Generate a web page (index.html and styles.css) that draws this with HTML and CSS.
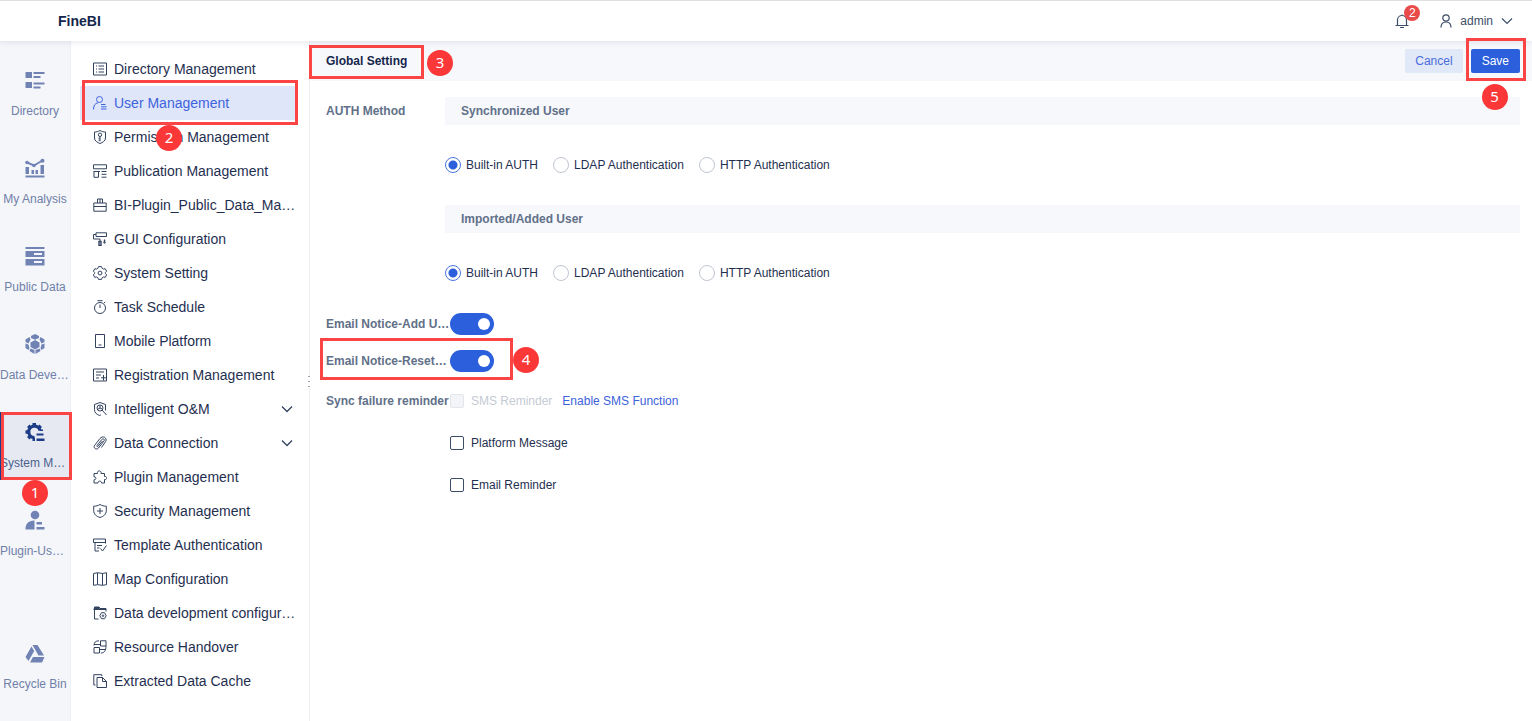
FILE: index.html
```html
<!DOCTYPE html>
<html lang="en">
<head>
    <meta charset="UTF-8">
    <meta name="viewport" content="width=device-width, initial-scale=1">
    <title>FineBI</title>
    <link rel="stylesheet" href="styles.css">
</head>
<body>
<header class="topbar">
    <div class="brand">FineBI</div>
    <div class="account">
        <button class="bell" aria-label="Notifications">
            <svg width="14" height="16" viewBox="0 0 14 16"><path d="M0.500 12.500h13M2.500 12.500V7a4.500 4.500 0 0 1 9 0v5.500M7 2.500V1.500M5 14.500h4"/></svg>
            <span class="count">2</span>
        </button>
        <button class="user">
            <svg width="12" height="14" viewBox="0 0 12 14"><circle cx="6" cy="4" r="3.200"/><path d="M1 13.500c0-3.800 2-5.500 5-5.500s5 1.700 5 5.500"/></svg>
            <span>admin</span>
            <svg width="12" height="8" viewBox="0 0 12 8"><path d="M1 1.500l5 5 5-5"/></svg>
        </button>
    </div>
</header>

<div class="layout">
    <nav class="rail">
        <a href="#" class="rail-item">
            <svg width="20" height="20" viewBox="0 0 20 20"><path d="M0.500 2h6.500v6H0.500zM0.500 12h6.500v6H0.500zM8.500 2H19.500v2H8.500zM8.500 6h7v2h-7zM8.500 12.500H19.500v2H8.500zM8.500 16.500h7v2h-7z"/></svg>
            <span>Directory</span>
        </a>
        <a href="#" class="rail-item">
            <svg width="20" height="20" viewBox="0 0 20 20"><path d="M0.500 17.500h19v2h-19zM0.500 9h3.500v7H0.500zM6.500 12h2.500v4H6.500zM10.500 12H13v4h-2.500zM15.500 7h3.500v9h-3.500z"/><path d="M2 4.500l7 3 8.500-5" fill="none" stroke="currentColor" stroke-width="2"/><circle cx="2" cy="4.500" r="1.800"/><circle cx="9" cy="7.500" r="1.800"/><circle cx="17.500" cy="2.800" r="2"/></svg>
            <span>My Analysis</span>
        </a>
        <a href="#" class="rail-item">
            <svg width="20" height="20" viewBox="0 0 20 20"><path fill-rule="evenodd" d="M0.500 1h19v2h-19zM0.500 5h19v6h-19zM9 7v2h8V7zM0.500 13h19v6.500h-19zM9 15v2h8v-2z"/></svg>
            <span>Public Data</span>
        </a>
        <a href="#" class="rail-item">
            <svg width="20" height="20" viewBox="0 0 20 20"><path d="M6 2l4-2 4 2v2l-4 1.800L6 4zM0.500 5.500l4-2.500 1 2.500L3.500 9.500l-3-1.500zM19.500 5.500l-4-2.500-1 2.500 2 4 3-1.500zM0.500 9.500l3 1 1 4-1 1.500-3-2zM19.500 9.500l-3 1-1 4 1 1.500 3-2zM5.500 14.500l4 1.500v4l-5-3zM14.500 14.500l-4 1.500v4l5-3zM10 6l4.500 2.500v4.500L10 15.500 5.500 13V8.500z"/></svg>
            <span class="cut">Data Deve…</span>
        </a>
        <a href="#" class="rail-item active">
            <svg width="20" height="20" viewBox="0 0 20 20"><path d="M9.500 15.500A5.700 5.700 0 1 1 15 8.500" fill="none" stroke="currentColor" stroke-width="3.200"/><path d="M7.500 1h3.500v3H7.500zM0.500 8.200h3v3.500h-3zM2 5l2.500-2.500L7 5 4.500 7.500zM12 5l2.500-2.500L17 5l-2.500 2.500zM2 15l2.500-2.500L7 15l-2.500 2.500zM7.500 15.500h2.500V19H7.500zM14.500 7.500h3.500V9h-3.500zM11.500 11.500h7v2h-7zM11.500 16.500h8v2.500h-8z"/></svg>
            <span class="cut">System M…</span>
            <i class="mark mark-system"></i>
            <b class="step step-1">1</b>
        </a>
        <a href="#" class="rail-item">
            <svg width="20" height="20" viewBox="0 0 20 20"><circle cx="10" cy="5" r="4.300"/><path d="M0.500 19.500c0-5.500 2.500-9 9-9v9zM11.500 12H17v2.500h-5.500zM11.500 17h8v2.500h-8z"/></svg>
            <span class="cut">Plugin-Us…</span>
        </a>
        <a href="#" class="rail-item bottom">
            <svg width="20" height="20" viewBox="0 0 20 20"><path d="M7.500 2h5l6.500 10.500h-5.500zM6.500 3.500l2.700 4.500L3.500 18 0.500 14zM8 14h11.500L17 19.500H5z"/></svg>
            <span>Recycle Bin</span>
        </a>
    </nav>

    <nav class="menu">
        <a href="#" class="menu-item"><svg viewBox="0 0 14 14"><path d="M0.500 1h13v12h-13zM3 4h1M3 7h1M3 10h1M5.500 4H11M5.500 7H11M5.500 10H11"/></svg><span>Directory Management</span></a>
        <a href="#" class="menu-item active">
            <svg viewBox="0 0 14 14"><circle cx="6.500" cy="3.500" r="3"/><path d="M0.500 13.500c0-4 1.500-6 4.500-6.800M8 8.500h4.500M8 10.800h5.500M8 13h5.500"/></svg><span>User Management</span>
            <i class="mark mark-users"></i>
            <b class="step step-2">2</b>
        </a>
        <a href="#" class="menu-item"><svg viewBox="0 0 14 14"><path d="M7 0.500c2 1.200 3.500 1.500 5.500 1.500v6c0 3-3 4.500-5.500 5.500C4.500 12.500 1.500 11 1.500 8V2C3.500 2 5 1.700 7 0.500z"/><circle cx="7" cy="4.800" r="1.700"/><path d="M7 6.500v4.700M7 8.200H5.500M7 10.200H5.500"/></svg><span>Permission Management</span></a>
        <a href="#" class="menu-item"><svg viewBox="0 0 14 14"><path d="M0.500 0.800h13v4h-13zM1 7.500h4.500v5.800H1zM0.500 7.500H7M8.500 7.500h5M8.500 10.300h5M8.500 13.200h5"/></svg><span>Publication Management</span></a>
        <a href="#" class="menu-item"><svg viewBox="0 0 14 14"><path d="M0.800 5h12.400v8.200H0.800zM4.500 5V1h5v4M7 1v4M0.800 8.500h12.400"/></svg><span>BI-Plugin_Public_Data_Ma…</span></a>
        <a href="#" class="menu-item"><svg viewBox="0 0 14 14"><path d="M3 0.800h10.500v3.700H3zM3 2.500H0.500V7H7v2"/><path d="M6 9.500h2v4H6zM11.500 7.500v3" stroke-width="1.400"/><circle cx="11.500" cy="10.500" r="0.800"/></svg><span>GUI Configuration</span></a>
        <a href="#" class="menu-item"><svg viewBox="0 0 14 14"><path d="M5.500 0.600h3l.6 1.700 1.300.8 1.800-.4 1.400 2.500L12.400 6.500v1l1.200 1.400-1.400 2.500-1.800-.4-1.300.8-.6 1.600h-3l-.6-1.600-1.300-.8-1.800.4L.4 8.900l1.200-1.400v-1L.4 5.200l1.400-2.500 1.800.4 1.300-.8z"/><circle cx="7" cy="7" r="1.900"/></svg><span>System Setting</span></a>
        <a href="#" class="menu-item"><svg viewBox="0 0 14 14"><circle cx="7" cy="8" r="5.500"/><path d="M4.500 0.700h5M7 4.500V8M11 3l1.200-1"/></svg><span>Task Schedule</span></a>
        <a href="#" class="menu-item"><svg viewBox="0 0 14 14"><path d="M2.500 0.500h9v13h-9zM5.500 11h3"/></svg><span>Mobile Platform</span></a>
        <a href="#" class="menu-item"><svg viewBox="0 0 14 14"><path d="M13.500 6V1H0.500v12H9M3 4h8M3 7h5M3 10h3M10.500 7v5.500M8 9.800h5.500M13.500 6v7H9"/></svg><span>Registration Management</span></a>
        <a href="#" class="menu-item"><svg viewBox="0 0 14 14"><path d="M8 12.800l-1.500.7C3 12 1.500 10.500 1.500 7.500V2.500L7 0.500l5.500 2v6"/><circle cx="7" cy="6" r="3"/><path d="M9 8l4.500 5M7 3.500V6l2 1M4.500 7.500L7 6"/></svg><span>Intelligent O&amp;M</span><svg class="arrow" viewBox="0 0 12 8"><path d="M1 1.500l5 5 5-5"/></svg></a>
        <a href="#" class="menu-item"><svg viewBox="0 0 14 14"><path d="M4 9.500l4.800-6c1.500-1.500 3.200 0 2.200 1.500L5.500 12c-2 2.200-5.500.3-4-2.500L7 2.500C9.500-.8 14.500 1.500 12.700 5.500L8.500 11.500M4 9.500c-.5 1 .5 1.500 1.200.7L9.500 5"/></svg><span>Data Connection</span><svg class="arrow" viewBox="0 0 12 8"><path d="M1 1.500l5 5 5-5"/></svg></a>
        <a href="#" class="menu-item"><svg viewBox="0 0 14 14"><path d="M1 3.500h3.500c-.8-3.500 4.300-3.500 3.500 0h3.500V6.500c3-.5 3 3.500 0 3v3.500H8.500c.3-2.500-3.800-2.500-3.500 0H1V9.800c2.500.3 2.500-3.300 0-3z"/></svg><span>Plugin Management</span></a>
        <a href="#" class="menu-item"><svg viewBox="0 0 14 14"><path d="M7 0.500c2 1.200 4 1.700 6.300 1.700v4.300c0 4-3 6-6.300 7-3.300-1-6.300-3-6.300-7V2.200C3 2.200 5 1.700 7 0.500zM7 4v6M4 7h6"/></svg><span>Security Management</span></a>
        <a href="#" class="menu-item"><svg viewBox="0 0 14 14"><path d="M12.500 5.500V1H0.500v3.500h12M2 4.500v8.500h4M4 7.500h5M4 10h2.500M7.500 10.500l2 2.500 4-5.500"/></svg><span>Template Authentication</span></a>
        <a href="#" class="menu-item"><svg viewBox="0 0 14 14"><path d="M0.500 1.500l4-.8 5 .8 4-.8v12l-4 .6-5-.6-4 .6zM4.500 1v11.500M9.500 1.500V13"/></svg><span>Map Configuration</span></a>
        <a href="#" class="menu-item"><svg viewBox="0 0 14 14"><path d="M5.500 13H1.500V1H6l1 1.500h6v3"/><path d="M1.500 1.700h5M0.500 3.300h12.500" stroke-width="1.500"/><path d="M8.500 6.700h3l1.700 3-1.700 3h-3l-1.700-3z"/><circle cx="10" cy="9.700" r="0.800"/></svg><span>Data development configur…</span></a>
        <a href="#" class="menu-item"><svg viewBox="0 0 14 14"><path d="M7.500 0.800H13V6H7.500zM1 7.500h5.500V13H1zM1 5.500c0-3 1.500-4.700 5-4.700M1 4.500h6.500M13 6c0 4.500-1.500 7-5 7M6.500 9.500H12"/></svg><span>Resource Handover</span></a>
        <a href="#" class="menu-item"><svg viewBox="0 0 14 14"><path d="M4 3.500h5.500l4 4v6H4zM9.500 3.500v4h4M2.500 11H0.800V0.700h8v1.500"/></svg><span>Extracted Data Cache</span></a>
        <i class="grip"></i>
    </nav>

    <main class="content">
        <div class="toolbar">
            <h1 class="tab">Global Setting<i class="mark mark-tab"></i><b class="step step-3">3</b></h1>
            <div class="actions">
                <button class="btn">Cancel</button>
                <div class="save-wrap">
                    <button class="btn primary">Save</button>
                    <i class="mark mark-save"></i>
                    <b class="step step-5">5</b>
                </div>
            </div>
        </div>

        <form class="settings">
            <div class="auth">
                <div class="label auth-label">AUTH Method</div>
                <div class="auth-groups">
                    <h2 class="group-title">Synchronized User</h2>
                    <div class="radios">
                        <label><input type="radio" name="sync" checked>Built-in AUTH</label>
                        <label><input type="radio" name="sync">LDAP Authentication</label>
                        <label><input type="radio" name="sync">HTTP Authentication</label>
                    </div>
                    <h2 class="group-title">Imported/Added User</h2>
                    <div class="radios">
                        <label><input type="radio" name="imported" checked>Built-in AUTH</label>
                        <label><input type="radio" name="imported">LDAP Authentication</label>
                        <label><input type="radio" name="imported">HTTP Authentication</label>
                    </div>
                </div>
            </div>

            <div class="row">
                <label class="label" for="noticeAdd">Email Notice-Add U…</label>
                <input type="checkbox" class="switch" id="noticeAdd" checked>
            </div>
            <div class="row">
                <label class="label" for="noticeReset">Email Notice-Reset…</label>
                <input type="checkbox" class="switch" id="noticeReset" checked>
                <i class="mark mark-reset"></i>
                <b class="step step-4">4</b>
            </div>

            <div class="reminder">
                <div class="label">Sync failure reminder</div>
                <div class="checks">
                    <div class="check-row">
                        <label class="disabled"><input type="checkbox" class="check" disabled>SMS Reminder</label>
                        <a href="#" class="link">Enable SMS Function</a>
                    </div>
                    <div class="check-row"><label><input type="checkbox" class="check">Platform Message</label></div>
                    <div class="check-row"><label><input type="checkbox" class="check">Email Reminder</label></div>
                </div>
            </div>
        </form>
    </main>
</div>
</body>
</html>
```
FILE: styles.css
```css
* {
    box-sizing: border-box;
}

body {
    margin: 0;
    min-height: 100vh;
    display: flex;
    flex-direction: column;
    font-family: "Liberation Sans", Arial, sans-serif;
    font-size: 12px;
    line-height: 16px;
    color: #1f2f50;
    background: white;
}

a {
    color: inherit;
    text-decoration: none;
}

button {
    font: inherit;
    color: inherit;
    border: 0;
    padding: 0;
    background: none;
    cursor: pointer;
}

svg {
    flex: none;
}

/* top bar */
.topbar {
    position: relative;
    z-index: 1;
    display: flex;
    align-items: center;
    justify-content: space-between;
    height: 41px;
    padding: 0 19px 0 58px;
    border-top: 1px solid #dedfe1;
    background: white;
    box-shadow: 0 1px 6px rgba(30, 50, 90, 0.12);
}

.brand {
    font-size: 14px;
    font-weight: bold;
    color: #14264b;
}

.account,
.user {
    display: flex;
    align-items: center;
}

.account {
    gap: 31px;
}

.account svg {
    display: block;
    fill: none;
    stroke: #3d4d68;
    stroke-width: 1.2;
}

.bell {
    position: relative;
}

.count {
    position: absolute;
    top: -8px;
    left: 9px;
    width: 16px;
    border-radius: 8px;
    background: #e94b4b;
    color: white;
    text-align: center;
}

.user {
    gap: 8px;
    color: #3d4d68;
}

.layout {
    flex: 1;
    display: flex;
}

/* left rail */
.rail {
    width: 71px;
    flex: none;
    display: flex;
    flex-direction: column;
    gap: 20px;
    padding: 19px 0 20px;
    background: #f4f6fa;
    border-right: 1px solid #f0f1f6;
}

.rail-item {
    position: relative;
    display: flex;
    flex-direction: column;
    align-items: center;
    justify-content: space-between;
    height: 68px;
    padding: 10px 0 9px;
    color: #7183b5;
    white-space: nowrap;
}

.rail-item svg {
    fill: currentColor;
}

.rail-item span {
    color: #7080a8;
}

.rail-item .cut {
    align-self: flex-start;
}

.rail-item.active {
    background: #e6e9f2;
    box-shadow: inset 1px 0 #1c3c87;
    color: #1c3c87;
}

.rail-item.active span {
    color: #4c5f8c;
}

.rail-item.bottom {
    margin-top: auto;
}

/* menu */
.menu {
    position: relative;
    width: 239px;
    flex: none;
    padding: 11px 11px 11px 9px;
    border-right: 1px solid #eff0f4;
}

.menu-item {
    position: relative;
    display: flex;
    align-items: center;
    gap: 7px;
    height: 34px;
    padding: 0 5px 0 13px;
    font-size: 14px;
    white-space: nowrap;
}

.menu-item svg {
    width: 14px;
    height: 14px;
    fill: none;
    stroke: #33435f;
    stroke-width: 1;
}

.menu-item .arrow {
    width: 12px;
    height: 8px;
    margin-left: auto;
    stroke-width: 1.3;
}

.menu-item.active {
    background: #dfe6f9;
    color: #3d63dc;
}

.menu-item.active svg {
    stroke: #3d63dc;
}

.grip {
    position: absolute;
    top: 335px;
    right: -1px;
    width: 2px;
    height: 12px;
    background: repeating-linear-gradient(#9a9cac 0 1px, white 1px 5px);
}

/* content */
.content {
    flex: 1;
    min-width: 0;
}

.toolbar {
    display: flex;
    align-items: center;
    justify-content: space-between;
    height: 40px;
    padding: 0 12px 0 16px;
    background: #f7f8fc;
}

.tab {
    position: relative;
    margin: 0;
    font-size: 12px;
    color: #14264b;
}

.actions {
    display: flex;
    gap: 8px;
}

.save-wrap {
    position: relative;
}

.btn {
    display: block;
    height: 24px;
    padding: 0 10px;
    border-radius: 2px;
    background: #e1e8f7;
    color: #4a6ddc;
}

.btn.primary {
    padding: 0 11px;
    background: #2b5fdb;
    color: white;
}

.settings {
    padding: 16px 12px 16px 16px;
}

.label {
    width: 124px;
    flex: none;
    font-weight: bold;
    color: #617088;
    white-space: nowrap;
}

.auth {
    display: flex;
    margin-bottom: 24px;
}

.auth-label {
    width: 119px;
    line-height: 28px;
}

.auth-groups {
    flex: 1;
}

.group-title {
    margin: 0;
    padding: 0 16px;
    font-size: 12px;
    line-height: 28px;
    color: #617088;
    background: #f7f8fc;
}

.radios {
    display: flex;
    gap: 15px;
    padding: 32px 0;
}

.radios:last-child {
    padding: 32px 0 0;
}

.radios label {
    display: flex;
    align-items: center;
    gap: 5px;
}

input {
    appearance: none;
    flex: none;
    margin: 0;
}

.radios input {
    width: 16px;
    height: 16px;
    border: 1px solid #bfc5d0;
    border-radius: 50%;
}

.radios input:checked {
    border-color: #4a74df;
    background: radial-gradient(circle, #2b5fdb 4px, white 5px);
}

.row {
    position: relative;
    display: flex;
    align-items: center;
    height: 37px;
}

.switch {
    display: flex;
    align-items: center;
    width: 44px;
    height: 22px;
    padding: 0 4px;
    border-radius: 11px;
    background: #c4cad6;
}

.switch:checked {
    justify-content: flex-end;
    background: #2b5fdb;
}

.switch::before {
    content: "";
    width: 12px;
    height: 12px;
    border-radius: 50%;
    background: white;
}

.reminder {
    display: flex;
    margin-top: 1px;
}

.reminder .label {
    line-height: 42px;
}

.check-row {
    display: flex;
    align-items: center;
    gap: 10px;
    height: 42px;
}

.check-row label {
    display: flex;
    align-items: center;
    gap: 7px;
}

.check {
    width: 14px;
    height: 14px;
    border: 1px solid #3d4d68;
    border-radius: 2px;
}

.check:checked {
    background: #2b5fdb;
}

.check:disabled {
    border-color: #e3e6ec;
    background: #f2f4f8;
}

.disabled {
    color: #c5cad4;
}

.link {
    color: #3d63dc;
}

/* guide boxes and step numbers */
.mark {
    position: absolute;
    border: 3px solid #fb4545;
}

.step {
    position: absolute;
    z-index: 2;
    width: 26px;
    height: 26px;
    border-radius: 50%;
    background: #fb3737;
    color: white;
    font: 15px/25px "Noto Sans", sans-serif;
    text-align: center;
}

.mark-system {
    inset: 0 -2px 0 1px;
}

.step-1 {
    top: 68px;
    left: 22px;
}

.mark-users {
    inset: -6px 0 -5px 2px;
}

.step-2 {
    top: 39px;
    left: 76px;
}

.mark-tab {
    inset: -8px -17px -10px -17px;
}

.step-3 {
    top: -3px;
    left: 101px;
}

.mark-reset {
    top: -4px;
    left: -6px;
    width: 193px;
    height: 42px;
}

.step-4 {
    top: 5px;
    left: 187px;
}

.mark-save {
    inset: -11px -6px -8px -5px;
    z-index: 2;
    pointer-events: none;
}

.step-5 {
    top: 35px;
    left: 11px;
}
```
